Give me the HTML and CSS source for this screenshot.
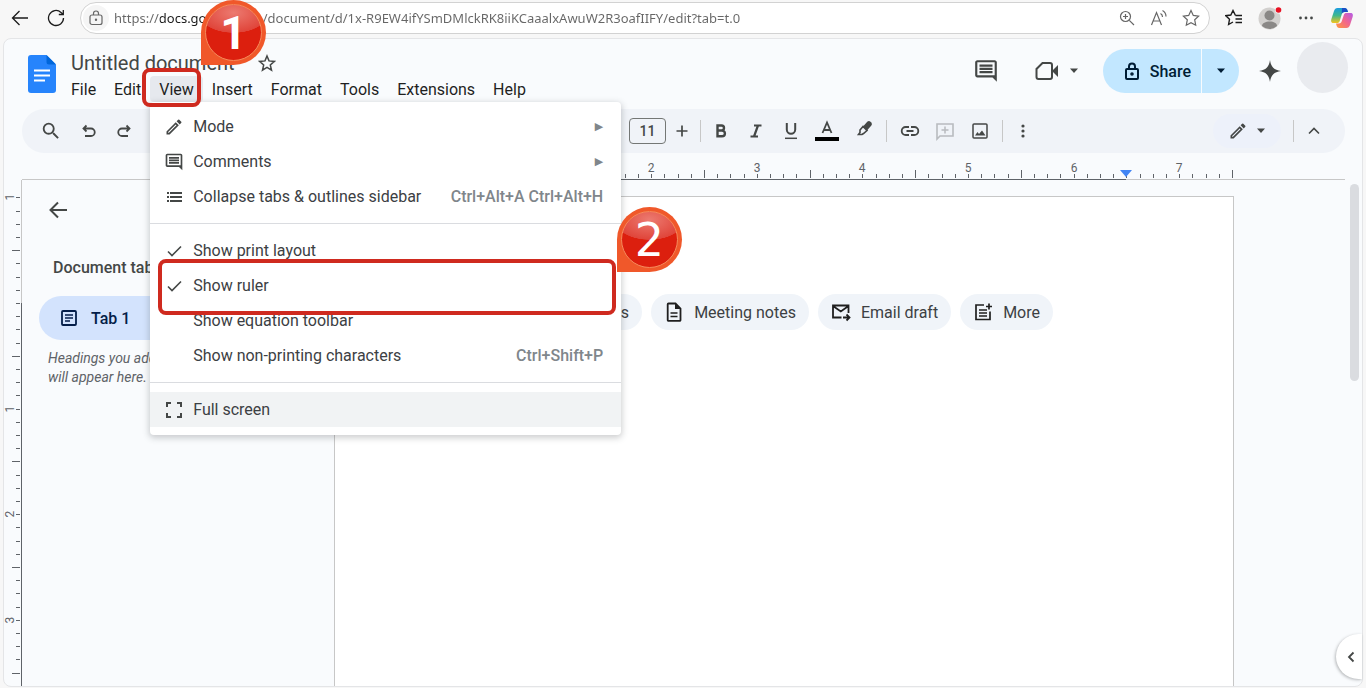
FILE: index.html
```html
<!DOCTYPE html>
<html lang="en">
<head>
    <meta charset="UTF-8">
    <meta name="viewport" content="width=device-width, initial-scale=1.0">
    <title>Untitled document</title>
    <link rel="stylesheet" href="styles.css">
</head>
<body>
    <!-- browser bar -->
    <div class="browser-bar">
        <button class="nav-btn" aria-label="Back">
            <svg width="18" height="18" viewBox="0 0 18 18" class="line"><path d="M8.500 2 1.500 9l7 7M1.500 9H17" stroke-width="1.300"/></svg>
        </button>
        <button class="nav-btn" aria-label="Reload">
            <svg width="18" height="18" viewBox="0 0 18 18" class="line"><path d="M16.500 9A7.500 7.500 0 1 1 14 3.400L16 5.300M16.300 1v4.500h-4.500" stroke-width="1.300"/></svg>
        </button>
        <div class="url-bar">
            <button class="lock-btn" aria-label="Site information">
                <svg width="14" height="16" viewBox="0 0 14 16" class="line"><rect x="1" y="5" width="12" height="9.500" rx="2"/><path d="M4.500 5V3.500a2.500 2.500 0 0 1 5 0V5"/><circle cx="7" cy="9.800" r=".6"/></svg>
            </button>
            <input class="url-input" type="text" aria-label="Address" value="https://docs.google.com/document/d/1x-R9EW4ifYSmDMlckRK8iiKCaaalxAwuW2R3oafIIFY/edit?tab=t.0">
            <button class="url-btn" aria-label="Zoom">
                <svg width="16" height="16" viewBox="0 0 16 16" class="line"><circle cx="6.500" cy="6.500" r="5"/><path d="M10.300 10.300 15 15M4 6.500h5M6.500 4v5"/></svg>
            </button>
            <button class="url-btn" aria-label="Read aloud">
                <svg width="18" height="18" viewBox="0 0 18 18" class="line"><path d="M1.500 16 6.500 3.500 11.500 16M3.200 12h6.600M10.500 4.500q2 1 2 3.500M12.500 1.500q3.500 2 3.500 6"/></svg>
            </button>
            <button class="url-btn" aria-label="Add to favorites">
                <svg width="18" height="18" viewBox="0 0 18 18" class="line"><path d="m9 1.500 2.300 4.900 5.300.700-3.900 3.700 1 5.400L9 13.600l-4.700 2.600 1-5.400L1.400 7.100l5.300-.7z"/></svg>
            </button>
        </div>
        <div class="browser-actions">
            <button class="action-btn" aria-label="Favorites">
                <svg width="18" height="18" viewBox="0 0 18 18" class="line"><path d="M10.500 6.500 8 1.500 5.800 6l-5 .7 3.700 3.600-.9 5.200L8 13M10.500 6.500h6.500M10.500 10H17M10.500 13.500H17" stroke-width="1.400"/></svg>
            </button>
            <button class="action-btn" aria-label="Profile">
                <svg width="24" height="24" viewBox="0 0 24 24"><circle cx="11.500" cy="12.500" r="11" fill="#d2d0ce"/><circle cx="11.500" cy="9.500" r="5" fill="#8a8886"/><path d="M4 20c0-6 15-6 15 0a11 11 0 0 1-15 0z" fill="#8a8886"/><circle cx="20.500" cy="4" r="3.500" fill="#f7f7f7"/><circle cx="20.500" cy="4" r="2.800" fill="#e81123"/></svg>
            </button>
            <button class="action-btn" aria-label="Settings">
                <svg width="16" height="16" viewBox="0 0 16 16"><circle cx="2.500" cy="8" r="1.400"/><circle cx="8" cy="8" r="1.400"/><circle cx="13.500" cy="8" r="1.400"/></svg>
            </button>
            <button class="action-btn" aria-label="Copilot">
                <svg width="24" height="24" viewBox="0 0 24 24">
                    <defs>
                        <linearGradient id="cpA" x1="0" y1="0" x2="0" y2="1"><stop offset="0" stop-color="#1a9be0"/><stop offset=".5" stop-color="#3fb88c"/><stop offset="1" stop-color="#f5c31b"/></linearGradient>
                        <linearGradient id="cpB" x1="1" y1="0" x2="0" y2="1"><stop offset="0" stop-color="#b45be8"/><stop offset=".5" stop-color="#f2668c"/><stop offset="1" stop-color="#ff9a3c"/></linearGradient>
                    </defs>
                    <path d="M7.500 2h7.300c1.500 0 2.200 1 2.600 2.200L18 6h-3.500c-1.600 0-2.400 1-2.800 2.400l-2 6.600c-.5 1.600-1.300 2-2.700 2H3.500C1 17 .8 15 1.400 13l2.600-8C4.700 3 5.700 2 7.500 2z" fill="url(#cpA)"/>
                    <path d="M12 2h2.800c1.500 0 2.200 1 2.600 2.200L18 6h-3.500c-1.600 0-2.300.8-2.800 2z" fill="#1b4fc4"/>
                    <path d="M16.500 22H9.200c-1.500 0-2.200-1-2.600-2.200L6 17.500h3c1.600 0 2.400-1 2.800-2.400l2-6.100c.5-1.600 1.300-2 2.700-2h4c2.500 0 2.700 2 2.100 4L20 19c-.7 2-1.700 3-3.500 3z" fill="url(#cpB)"/>
                </svg>
            </button>
        </div>
    </div>

    <div class="app">
        <header class="header">
            <a class="logo" href="#" aria-label="Docs home">
                <svg width="28" height="38" viewBox="0 0 28 38"><path d="M3 0h15.500L28 9.500V35a3 3 0 0 1-3 3H3a3 3 0 0 1-3-3V3a3 3 0 0 1 3-3z" fill="#2684fc"/><path d="M18.500 0 28 9.500h-7a2.500 2.500 0 0 1-2.500-2.500z" fill="#0066da"/><path d="M6 15.500h16M6 20.500h16M6 25.500h11" stroke="#fff" stroke-width="2"/></svg>
            </a>
            <div class="title-block">
                <div class="title-row">
                    <h1 class="doc-title">Untitled document</h1>
                    <button class="star-btn" aria-label="Star">
                        <svg width="18" height="18" viewBox="0 0 18 18" class="line"><path d="m9 2 2 4.900 5.300.500-4 3.500 1.200 5.200L9 13.300l-4.500 2.800 1.200-5.200-4-3.500L7 6.900z" stroke-width="1.500"/></svg>
                    </button>
                </div>
                <nav class="menubar">
                    <button>File</button>
                    <button>Edit</button>
                    <div class="menu-wrap">
                        <button class="open">View</button>
                        <div class="menu">
                            <button class="menu-item">
                                <svg width="20" height="20" viewBox="0 0 24 24"><path d="M3 17.250V21h3.750L17.810 9.940l-3.750-3.750L3 17.250zM5.920 19H5v-.920l9.060-9.060.92.920L5.920 19zM20.710 5.630l-2.340-2.340a1 1 0 0 0-1.410 0l-1.830 1.830 3.750 3.750 1.830-1.830a1 1 0 0 0 0-1.410z"/></svg>
                                <span>Mode</span>
                                <span class="arrow">▶</span>
                            </button>
                            <button class="menu-item">
                                <svg width="20" height="20" viewBox="0 0 24 24"><path d="M21.990 4c0-1.100-.89-2-1.990-2H4c-1.100 0-2 .9-2 2v12c0 1.100.9 2 2 2h14l4 4-.010-18zM20 4v12H4V4h16zM6 12h12v2H6zm0-3h12v2H6zm0-3h12v2H6z"/></svg>
                                <span>Comments</span>
                                <span class="arrow">▶</span>
                            </button>
                            <button class="menu-item">
                                <svg width="20" height="20" viewBox="0 0 20 20"><path d="M3 5h2v2H3zM3 9h2v2H3zM3 13h2v2H3zM6 5h12v2H6zM6 9h12v2H6zM6 13h12v2H6z"/></svg>
                                <span>Collapse tabs &amp; outlines sidebar</span>
                                <span class="shortcut">Ctrl+Alt+A Ctrl+Alt+H</span>
                            </button>
                            <hr>
                            <button class="menu-item">
                                <svg width="20" height="20" viewBox="0 0 20 20" class="line"><path d="m4 10.500 4 4 9-9" stroke-width="1.600"/></svg>
                                <span>Show print layout</span>
                            </button>
                            <button class="menu-item">
                                <svg width="20" height="20" viewBox="0 0 20 20" class="line"><path d="m4 10.500 4 4 9-9" stroke-width="1.600"/></svg>
                                <span>Show ruler</span>
                            </button>
                            <button class="menu-item no-icon"><span>Show equation toolbar</span></button>
                            <button class="menu-item no-icon">
                                <span>Show non-printing characters</span>
                                <span class="shortcut">Ctrl+Shift+P</span>
                            </button>
                            <hr>
                            <button class="menu-item hovered">
                                <svg width="20" height="20" viewBox="0 0 20 20" class="line"><path d="M3 7V3h4M13 3h4v4M17 13v4h-4M7 17H3v-4" stroke-width="2"/></svg>
                                <span>Full screen</span>
                            </button>
                        </div>
                    </div>
                    <button>Insert</button>
                    <button>Format</button>
                    <button>Tools</button>
                    <button>Extensions</button>
                    <button>Help</button>
                </nav>
            </div>
            <div class="header-right">
                <button class="head-btn" aria-label="Comments">
                    <svg width="26" height="26" viewBox="0 0 24 24"><path d="M21.990 4c0-1.100-.89-2-1.990-2H4c-1.100 0-2 .9-2 2v12c0 1.100.9 2 2 2h14l4 4-.010-18zM20 4v12H4V4h16zM6 12h12v2H6zm0-3h12v2H6zm0-3h12v2H6z"/></svg>
                </button>
                <button class="head-btn meet" aria-label="Video call">
                    <svg width="24" height="20" viewBox="0 0 24 20"><path d="M7.500 2H15a2 2 0 0 1 2 2v12a2 2 0 0 1-2 2H3.500a2 2 0 0 1-2-2V8z" fill="none" stroke="#444746" stroke-width="2"/><path d="M17 10l6-6v12z"/></svg>
                    <svg width="10" height="6" viewBox="0 0 10 6"><path d="M1 .5h8L5 5z"/></svg>
                </button>
                <div class="share">
                    <button class="share-main">
                        <svg width="16" height="18" viewBox="0 0 16 18" class="line"><rect x="2" y="7" width="12" height="10" rx="1"/><path d="M5 7V4.500a3 3 0 0 1 6 0V7" stroke-width="2"/><circle cx="8" cy="12" r=".8"/></svg>
                        Share
                    </button>
                    <button class="share-more" aria-label="Share options">
                        <svg width="10" height="6" viewBox="0 0 10 6"><path d="M1 .5h8L5 5z"/></svg>
                    </button>
                </div>
                <button class="spark" aria-label="Gemini">
                    <svg width="22" height="22" viewBox="0 0 22 22"><path d="M11 0c1 7 4 10 11 11-7 1-10 4-11 11-1-7-4-10-11-11 7-1 10-4 11-11z"/></svg>
                </button>
                <span class="avatar"></span>
            </div>
        </header>

        <div class="toolbar">
            <div class="tools-left">
                <button class="tool search" aria-label="Search the menus">
                    <svg width="22" height="22" viewBox="0 0 24 24"><path d="M15.500 14h-.790l-.280-.270A6.470 6.470 0 0 0 16 9.500 6.500 6.500 0 1 0 9.500 16c1.610 0 3.090-.590 4.230-1.570l.270.280v.790l5 4.990L20.490 19l-4.990-5zm-6 0a4.500 4.500 0 1 1 0-9 4.500 4.500 0 0 1 0 9z"/></svg>
                </button>
                <button class="tool" aria-label="Undo">
                    <svg width="20" height="20" viewBox="0 0 20 20" class="line"><path d="M7.500 4.500 4.500 7.500l3 3M4.500 7.500H12a3.700 3.700 0 0 1 0 7.500H6" stroke-width="1.800"/></svg>
                </button>
                <button class="tool" aria-label="Redo">
                    <svg width="20" height="20" viewBox="0 0 20 20" class="line"><path d="M12.500 4.500 15.500 7.500l-3 3M15.500 7.500H8A3.700 3.700 0 0 0 8 15h6" stroke-width="1.800"/></svg>
                </button>
                <button class="tool" aria-label="Print">
                    <svg width="20" height="20" viewBox="0 0 20 20" class="line"><path d="M6 7V3h8v4M6 14H2.500V7h15v7H14M6 11h8v6H6z" stroke-width="1.600"/></svg>
                </button>
            </div>
            <input class="font-size" type="text" value="11" aria-label="Font size">
            <button class="tool narrow" aria-label="Increase font size">
                <svg width="14" height="14" viewBox="0 0 14 14" class="line"><path d="M7 1.500v11M1.500 7h11" stroke-width="1.700"/></svg>
            </button>
            <span class="divider"></span>
            <button class="tool" aria-label="Bold">
                <svg width="20" height="20" viewBox="0 0 20 20" class="line"><path d="M6.500 4.500H10.500a2.500 2.500 0 0 1 0 5H6.500zM6.500 9.500H11a2.900 2.900 0 0 1 0 5.800H6.500z" stroke-width="2.400"/></svg>
            </button>
            <button class="tool" aria-label="Italic">
                <svg width="20" height="20" viewBox="0 0 20 20" class="line"><path d="M8 4.500h7.500M4.500 15.500H12M12 4.500 8 15.500" stroke-width="2.200"/></svg>
            </button>
            <button class="tool" aria-label="Underline">
                <svg width="20" height="20" viewBox="0 0 20 20" class="line"><path d="M5.800 2v6.500a4.200 4.200 0 0 0 8.400 0V2" stroke-width="2"/><path d="M4 17.300h12" stroke-width="1.500"/></svg>
            </button>
            <button class="tool wide" aria-label="Text color">
                <svg width="24" height="22" viewBox="0 0 24 22"><path d="M7.500 13 12 2.500 16.500 13M9 10h6" fill="none" stroke="#444746" stroke-width="1.800"/><path d="M0 17h24v4H0z" fill="#000"/></svg>
            </button>
            <button class="tool wide" aria-label="Highlight color">
                <svg width="20" height="24" viewBox="0 0 20 24"><path d="M8 7.500 12.500 2.600q1.500-1.200 3 .2l.8.800q1.300 1.500.1 2.900L12 11.500z"/><path d="M8 7.500 5 11v2.500L3.500 15.500H7L8.500 14.500 12 11.500z" fill="none" stroke="#444746" stroke-width="1.600"/></svg>
            </button>
            <span class="divider"></span>
            <div class="insert-tools">
                <button class="tool" aria-label="Insert link">
                    <svg width="20" height="20" viewBox="0 0 20 20" class="line"><path d="M9 6H5.700a4 4 0 0 0 0 8H9M11 6h3.300a4 4 0 0 1 0 8H11M6.500 10h7" stroke-width="1.800"/></svg>
                </button>
                <button class="tool" aria-label="Add comment" disabled>
                    <svg width="20" height="20" viewBox="0 0 20 20"><path d="M2 18V3h16v12H5z" fill="none" stroke="#b8bbbf" stroke-width="1.600"/><path d="M10 5.500v7M6.500 9h7" stroke="#b8bbbf" stroke-width="1.500"/></svg>
                </button>
                <button class="tool" aria-label="Insert image">
                    <svg width="20" height="20" viewBox="0 0 20 20"><rect x="3" y="3" width="14" height="14" rx="1" fill="none" stroke="#444746" stroke-width="1.500"/><path d="M5 14.500 7.500 11l1.500 2 3-3.500 3.500 5z"/></svg>
                </button>
            </div>
            <span class="divider"></span>
            <button class="tool" aria-label="More">
                <svg width="4" height="16" viewBox="0 0 4 16"><circle cx="2" cy="3" r="1.600"/><circle cx="2" cy="8" r="1.600"/><circle cx="2" cy="13" r="1.600"/></svg>
            </button>
            <div class="tools-right">
                <button class="mode-btn" aria-label="Editing mode">
                    <svg width="20" height="20" viewBox="0 0 24 24"><path d="M3 17.250V21h3.750L17.810 9.940l-3.750-3.750L3 17.250zM5.920 19H5v-.920l9.060-9.060.92.920L5.920 19zM20.710 5.630l-2.340-2.340a1 1 0 0 0-1.410 0l-1.830 1.830 3.750 3.750 1.830-1.830a1 1 0 0 0 0-1.410z"/></svg>
                    <svg width="10" height="6" viewBox="0 0 10 6"><path d="M1 .5h8L5 5z"/></svg>
                </button>
                <span class="divider"></span>
                <button class="tool" aria-label="Hide the menus">
                    <svg width="14" height="10" viewBox="0 0 14 10" class="line"><path d="M2 7.500l5-5 5 5" stroke-width="1.600"/></svg>
                </button>
            </div>
        </div>

        <div class="ruler-row">
            <svg class="ruler-h" id="rulerH" width="900" height="20"></svg>
        </div>

        <div class="workspace">
            <svg class="ruler-v" id="rulerV" width="18"></svg>
            <main class="canvas">
                <aside class="sidebar">
                    <button class="back-btn" aria-label="Close sidebar">
                        <svg width="20" height="20" viewBox="0 0 20 20" class="line"><path d="M10 2.500 2.500 10l7.500 7.500M2.500 10H19" stroke-width="2"/></svg>
                    </button>
                    <h2>Document tabs</h2>
                    <button class="tab">
                        <svg width="18" height="18" viewBox="0 0 18 18" class="line"><rect x="2" y="2" width="14" height="14" rx="1" stroke-width="1.800"/><path d="M5 6h8M5 9h8M5 12h5" stroke-width="1.500"/></svg>
                        Tab 1
                    </button>
                    <p>Headings you add to the document<br>will appear here.</p>
                </aside>
                <div class="page">
                    <div class="chips">
                        <button class="chip">Templates</button>
                        <button class="chip">
                            <svg width="20" height="20" viewBox="0 0 20 20"><path d="M4.500 1.500h7l5 5V18a.8.8 0 0 1-.8.8H4.500a.8.8 0 0 1-.8-.8V2.300a.8.8 0 0 1 .8-.8z" fill="none" stroke="#1f1f1f" stroke-width="1.800"/><path d="M11 1.500v5.500h5.500z"/><path d="M6.500 11h7M6.500 14.500h7" stroke="#1f1f1f" stroke-width="1.600"/></svg>
                            Meeting notes
                        </button>
                        <button class="chip">
                            <svg width="20" height="20" viewBox="0 0 20 20" class="line"><path d="M10.500 15.500H2v-12h15.500V11M2 4l7.800 5.500L17.500 4M12 15.500h6M15.500 12.500l3 3-3 3" stroke-width="1.800"/></svg>
                            Email draft
                        </button>
                        <button class="chip">
                            <svg width="20" height="20" viewBox="0 0 20 20" class="line"><path d="M11 3H3v14.500h14V9.500M6 8h8M6 11h8M6 14h8" stroke-width="1.700"/><path d="M16 1.500v6M13 4.500h6" stroke-width="1.700"/></svg>
                            More
                        </button>
                    </div>
                </div>
            </main>
            <div class="scrollbar"><div class="thumb"></div></div>
        </div>

        <button class="side-toggle" aria-label="Show side panel">
            <svg width="10" height="12" viewBox="0 0 10 12" class="line"><path d="M7.500 1.500 3 6l4.500 4.500" stroke-width="1.800"/></svg>
        </button>
    </div>

    <!-- step markers -->
    <div class="frame frame-view"></div>
    <div class="frame frame-ruler"></div>
    <div class="badge badge-one"><span>1</span></div>
    <div class="badge badge-two"><span>2</span></div>

    <script>
        // 8 ticks per inch
        const INCH = 105.6;

        function add(svg, tag, attrs, text) {
            const el = document.createElementNS('http://www.w3.org/2000/svg', tag);
            for (const key in attrs) el.setAttribute(key, attrs[key]);
            if (text !== undefined) el.textContent = text;
            svg.appendChild(el);
        }

        function drawTop() {
            const svg = document.getElementById('rulerH');
            for (let i = -7; i <= 60; i++) {
                const x = Math.round(106 + i * INCH / 8);
                const half = i % 4 === 0 && i % 8 !== 0;
                add(svg, 'rect', { x: x, y: half ? 10 : 14, width: 1, height: half ? 8 : 4, class: 'tick' });
                if (i % 8 === 0 && i !== 0) {
                    add(svg, 'text', { x: x, y: 12, class: 'num' }, Math.abs(i / 8));
                }
            }
            add(svg, 'rect', { x: 106, y: 19, width: 686, height: 1, class: 'tick' });
            add(svg, 'path', { d: 'M786 10h12l-6 7z', class: 'marker' });
        }

        function drawLeft() {
            const svg = document.getElementById('rulerV');
            const height = svg.clientHeight;
            for (let i = -8; i <= 72; i++) {
                const y = Math.round(123 + i * INCH / 8);
                const half = i % 4 === 0 && i % 8 !== 0;
                if (y > height - 4) break;
                add(svg, 'rect', { x: half ? 8 : 12, y: y, width: half ? 8 : 4, height: 1, class: 'tick' });
                if (i % 8 === 0 && i !== 0) {
                    add(svg, 'text', { x: 0, y: 0, class: 'num', transform: 'translate(10 ' + y + ') rotate(-90)' }, Math.abs(i / 8));
                }
            }
            add(svg, 'rect', { x: 17, y: 0, width: 1, height: 123, class: 'edge' });
            add(svg, 'rect', { x: 17, y: 123, width: 1, height: height, class: 'tick' });
        }

        drawTop();
        drawLeft();
    </script>
</body>
</html>
```
FILE: styles.css
```css
:root {
    --icon: #444746;
    --text: #1f1f1f;
    --surface: #f9fbfd;
    --bar: #f0f3f8;
    --mark: #cf2a1f;
}

* {
    box-sizing: border-box;
}

body {
    margin: 0;
    height: 100vh;
    display: flex;
    flex-direction: column;
    overflow: hidden;
    background: #f7f7f7;
    color: var(--text);
    font-family: Roboto, Arial, sans-serif;
    font-size: 16px;
}

button {
    display: flex;
    align-items: center;
    justify-content: center;
    padding: 0;
    border: none;
    background: none;
    color: inherit;
    font: inherit;
    white-space: nowrap;
    cursor: pointer;
}

svg {
    flex: none;
    fill: var(--icon);
}

svg.line {
    fill: none;
    stroke: var(--icon);
    stroke-width: 1.2;
}

/* browser bar */
.browser-bar {
    display: flex;
    align-items: center;
    height: 38px;
    padding: 0 6px 2px 2px;
}

.nav-btn {
    width: 36px;
    height: 32px;
}

.nav-btn .line,
.action-btn .line {
    stroke: #1b1b1b;
}

.url-bar {
    flex: 1;
    display: flex;
    align-items: center;
    height: 32px;
    margin-left: 6px;
    padding: 0 2px;
    background: #fff;
    border: 1px solid #d2d2d2;
    border-radius: 16px;
}

.lock-btn {
    width: 26px;
    height: 26px;
    border-radius: 50%;
    background: #f5f5f5;
}

.url-bar .line {
    stroke: #666;
}

/* host part of the address is darker */
.url-input {
    flex: 1;
    min-width: 0;
    margin-left: 5px;
    padding: 0;
    border: none;
    outline: none;
    font-family: "Noto Sans", "Open Sans", sans-serif;
    font-size: 13px;
    color: #666;
    background: linear-gradient(90deg, #666 46px, #1b1b1b 46px, #1b1b1b 146px, #666 146px);
    background-clip: text;
    -webkit-background-clip: text;
    -webkit-text-fill-color: transparent;
}

.url-btn {
    width: 32px;
    height: 28px;
}

.browser-actions {
    display: flex;
    margin-left: 6px;
}

.action-btn {
    width: 36px;
    height: 32px;
}

/* app window */
.app {
    flex: 1;
    min-height: 0;
    position: relative;
    display: flex;
    flex-direction: column;
    margin: 0 3px 1px;
    border: 1px solid #e4e5e7;
    border-radius: 8px;
    background: var(--surface);
}

.header {
    display: flex;
    align-items: flex-start;
    height: 70px;
    padding: 0 14px 0 24px;
}

.logo {
    margin-top: 16px;
    line-height: 0;
}

.title-block {
    margin-left: 6px;
    padding-top: 11px;
}

.title-row {
    display: flex;
    align-items: center;
    height: 26px;
    padding-left: 9px;
}

.doc-title {
    margin: 0;
    font-size: 20px;
    font-weight: 400;
    color: var(--icon);
}

.star-btn {
    margin-left: 23px;
}

.menubar {
    display: flex;
}

.menubar > button,
.menu-wrap > button {
    height: 26px;
    padding: 0 9px;
    border-radius: 4px;
}

.menubar .open {
    background: #e6e9ee;
}

.menu-wrap {
    position: relative;
}

.menu {
    position: absolute;
    z-index: 5;
    top: 26px;
    left: 0;
    width: 471px;
    padding: 7px 0 8px;
    background: #fff;
    border-radius: 4px;
    box-shadow: 0 2px 6px 1px rgba(60, 64, 67, 0.25);
}

.menu-item {
    width: 100%;
    height: 35px;
    justify-content: flex-start;
    gap: 9px;
    padding: 0 18px 0 14px;
    color: #3c4043;
}

.menu-item.no-icon {
    padding-left: 43px;
}

.menu-item.hovered {
    background: #f1f3f4;
}

.menu hr {
    height: 1px;
    margin: 9px 0;
    border: none;
    background: #dadce0;
}

.shortcut {
    margin-left: auto;
    font-weight: 500;
    color: #80868b;
}

.arrow {
    margin-left: auto;
    font-family: "DejaVu Sans", sans-serif;
    font-size: 11px;
    color: #80868b;
}

.header-right {
    display: flex;
    align-items: center;
    height: 44px;
    margin: 10px 0 0 auto;
}

.head-btn {
    height: 40px;
    gap: 10px;
}

.head-btn.meet {
    margin: 0 24px 0 36px;
}

.share {
    display: flex;
    height: 44px;
    color: #001d35;
    font-weight: 500;
}

.share button {
    background: #c2e7ff;
}

.share .line {
    stroke: #001d35;
    stroke-width: 2;
}

.share svg {
    fill: #001d35;
}

.share svg.line {
    fill: none;
}

.share-main {
    gap: 10px;
    padding: 0 10px 0 21px;
    border-radius: 22px 0 0 22px;
}

.share-more {
    width: 37px;
    margin-left: 1px;
    border-radius: 0 22px 22px 0;
}

.spark {
    margin: 0 16px 0 20px;
}

.avatar {
    width: 51px;
    height: 51px;
    margin-bottom: 8px;
    border-radius: 50%;
    background: #e9ebef;
}

/* toolbar */
.toolbar {
    display: flex;
    align-items: center;
    height: 44px;
    margin: 0 17px 0 18px;
    border-radius: 22px;
    background: var(--bar);
}

.tools-left {
    flex: 0 0 607px;
    display: flex;
    padding-left: 9px;
}

.tool {
    width: 35px;
    height: 36px;
}

.tool.search {
    width: 40px;
}

.tool.narrow {
    width: 32px;
}

.tool.wide {
    width: 38px;
}

.font-size {
    width: 37px;
    height: 26px;
    padding: 0;
    border: 1px solid #747775;
    border-radius: 4px;
    background: none;
    color: var(--icon);
    font: 500 14px Roboto, sans-serif;
    text-align: center;
}

.divider {
    width: 1px;
    height: 22px;
    margin: 0 2px;
    background: #c7c7c7;
}

.insert-tools {
    display: flex;
    padding: 0 3px;
}

.tools-right {
    display: flex;
    align-items: center;
    margin-left: auto;
    padding-right: 14px;
}

.mode-btn {
    width: 68px;
    height: 34px;
    gap: 8px;
    margin-right: 10px;
    border-radius: 17px;
    background: #edf1fa;
}

/* rulers */
.ruler-row {
    height: 27px;
    margin: 0 17px 0 18px;
    padding: 7px 0 0 312px;
    overflow: hidden;
    background: linear-gradient(#c7c7c7, #c7c7c7) bottom / 100% 1px no-repeat;
}

.ruler-h {
    display: block;
}

.tick {
    fill: #5f6368;
}

.edge {
    fill: #c7c7c7;
}

.num {
    fill: #5f6368;
    font-size: 12px;
    text-anchor: middle;
}

.marker {
    fill: #4285f4;
}

.workspace {
    flex: 1;
    min-height: 0;
    display: flex;
}

.ruler-v {
    height: 100%;
    overflow: hidden;
}

.canvas {
    flex: 1;
    display: flex;
    overflow: hidden;
}

.sidebar {
    flex: 0 0 312px;
    display: flex;
    flex-direction: column;
    align-items: flex-start;
    padding: 20px 16px 0 17px;
}

.back-btn {
    margin-left: 9px;
}

.sidebar h2 {
    margin: 38px 0 0 14px;
    font-size: 16px;
    font-weight: 500;
    line-height: 20px;
    color: var(--icon);
}

.tab {
    width: 100%;
    height: 44px;
    justify-content: flex-start;
    gap: 13px;
    margin-top: 18px;
    padding-left: 21px;
    border-radius: 22px;
    background: #d3e3fd;
    color: #041e49;
    font-weight: 500;
}

.tab .line {
    stroke: #041e49;
}

.sidebar p {
    margin: 9px 0 0 9px;
    font-size: 14px;
    font-style: italic;
    line-height: 19px;
    color: #5f6368;
}

.page {
    flex: 1;
    margin: 16px 111px 0 0;
    padding-top: 97px;
    border: 1px solid #c7c7c7;
    border-bottom: none;
    background: #fff;
}

.chips {
    display: flex;
    justify-content: flex-end;
    gap: 9px;
    padding-right: 180px;
}

.chip {
    height: 36px;
    gap: 10px;
    padding: 0 13px;
    border-radius: 18px;
    background: #f0f4f9;
    color: #3c4043;
}

.chip svg {
    fill: #1f1f1f;
}

.chip svg.line {
    fill: none;
    stroke: #1f1f1f;
}

.scrollbar {
    width: 17px;
    padding: 4px 3px 0 5px;
}

.thumb {
    height: 197px;
    border-radius: 5px;
    background: #dadce0;
}

.side-toggle {
    position: absolute;
    right: 0;
    bottom: 7px;
    width: 26px;
    height: 45px;
    padding-left: 3px;
    border-radius: 23px 0 0 23px;
    background: #fff;
    box-shadow: -1px 1px 3px rgba(60, 64, 67, 0.35);
}

/* step markers drawn over the page */
.frame {
    position: absolute;
    z-index: 10;
    border: 4px solid var(--mark);
    border-radius: 8px;
    pointer-events: none;
}

.frame-view {
    top: 68px;
    left: 142px;
    width: 59px;
    height: 39px;
}

.frame-ruler {
    top: 259px;
    left: 158px;
    width: 458px;
    height: 56px;
}

.badge {
    position: absolute;
    z-index: 11;
    width: 65px;
    height: 65px;
    padding: 4px;
    border-radius: 50% 50% 50% 0;
    background: #f0582a;
}

.badge span {
    display: flex;
    align-items: center;
    justify-content: center;
    height: 57px;
    border: 1px solid #f58a5c;
    border-radius: 50%;
    background: radial-gradient(ellipse 38px 22px at 50% 14%, #ec7a70, #e0453a 90%, transparent 92%), #dc1f0e;
    color: #fff;
    font: bold 46px Roboto, Arial, sans-serif;
}

.badge-one {
    top: 0;
    left: 201px;
}

.badge-two {
    top: 207px;
    left: 617px;
}

.badge-two span {
    font: 46px "DejaVu Sans", sans-serif;
}
```
